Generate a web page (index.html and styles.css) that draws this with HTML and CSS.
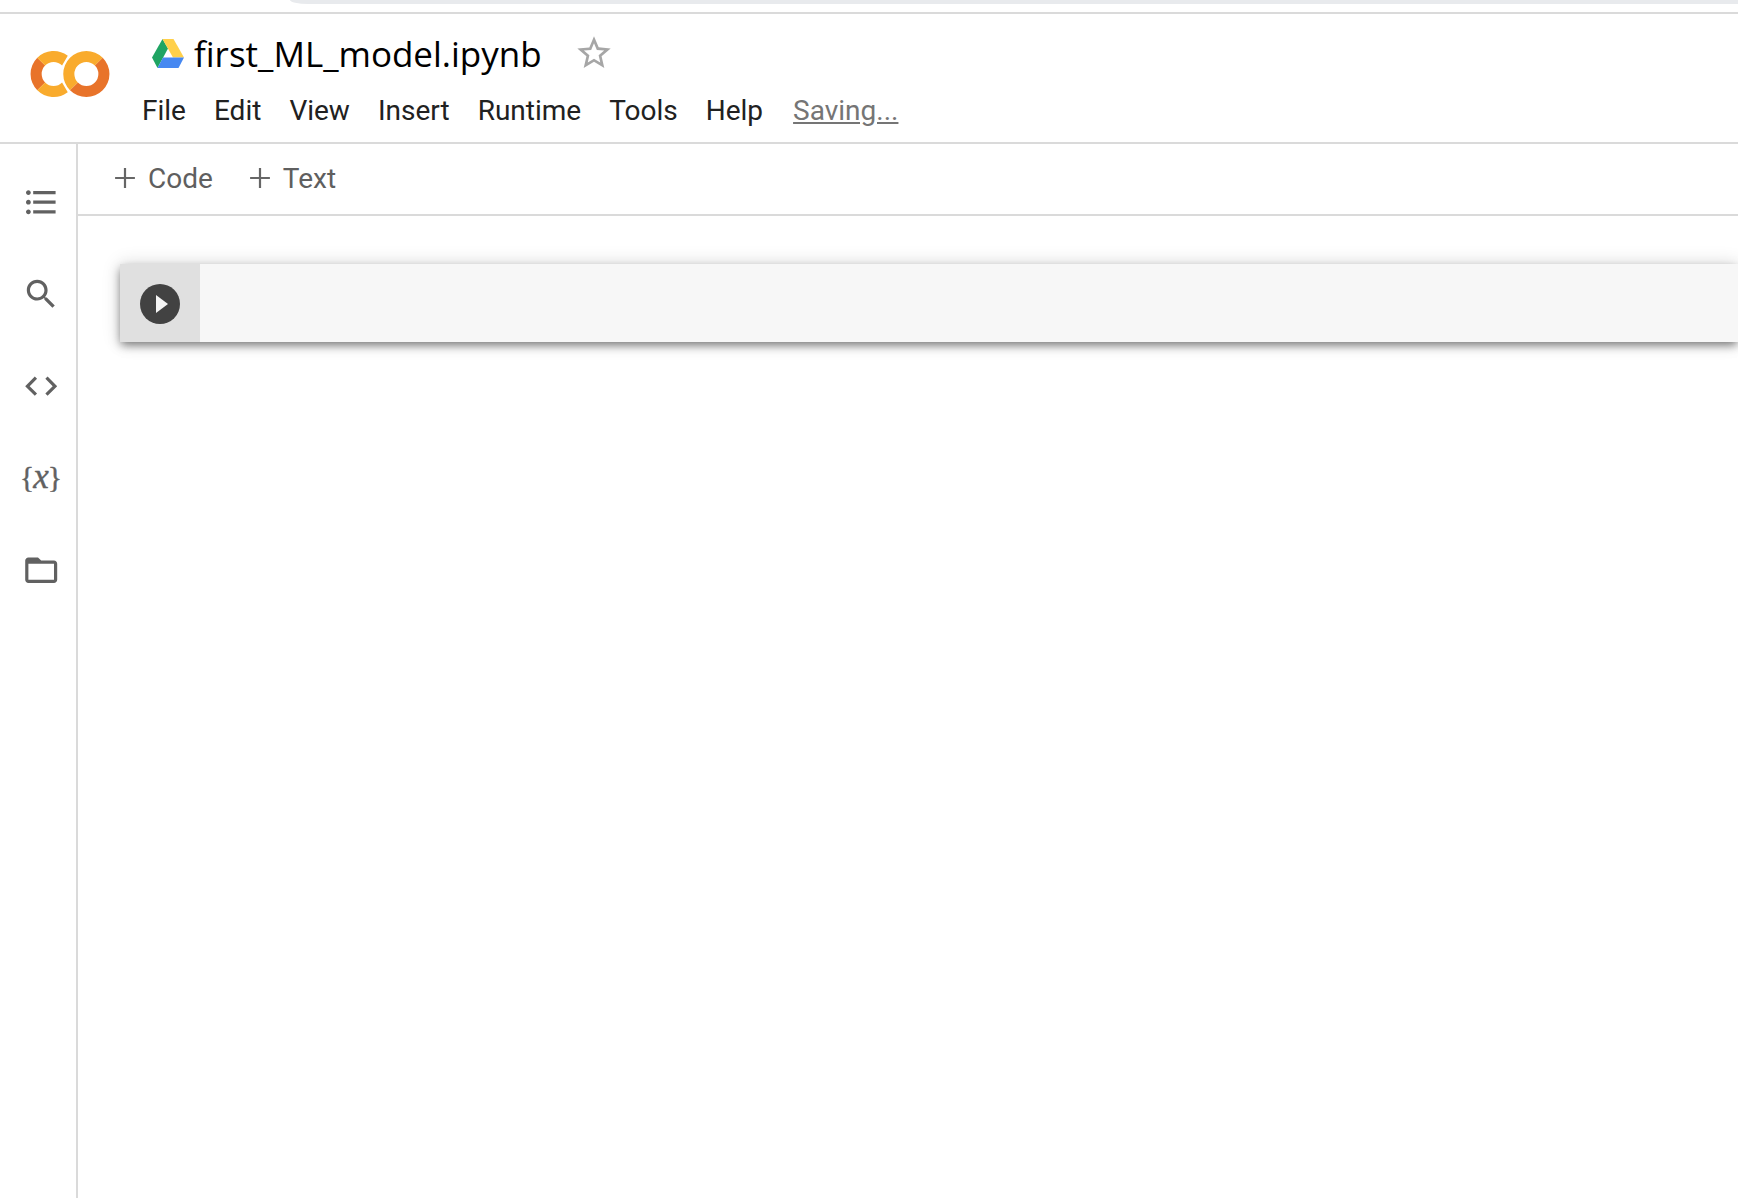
FILE: index.html
```html
<!DOCTYPE html>
<html lang="en">
<head>
<meta charset="utf-8">
<title>first_ML_model.ipynb</title>
<link rel="stylesheet" href="styles.css">
</head>
<body>
<div class="strip"><div class="strip-fill"></div></div>
<header class="header">
  <svg class="logo" viewBox="0 0 24 24">
    <path d="M4.54,9.46,2.19,7.1a6.93,6.93,0,0,0,0,9.79l2.36-2.36A3.59,3.59,0,0,1,4.54,9.46Z" fill="#E8732A"/>
    <path d="M2.19,7.1,4.54,9.46a3.59,3.59,0,0,1,5.08,0l1.71-2.93h0l-.1-.08h0A6.93,6.93,0,0,0,2.19,7.1Z" fill="#F9AB2D"/>
    <path d="M11.34,17.46h0L9.62,14.54a3.59,3.59,0,0,1-5.08,0L2.19,16.9a6.93,6.93,0,0,0,9,.65l.11-.09" fill="#F9AB2D"/>
    <path d="M12,7.1a6.93,6.93,0,0,0,0,9.79l2.36-2.36a3.59,3.59,0,1,1,5.08-5.08L21.81,7.1A6.93,6.93,0,0,0,12,7.1Z" fill="#F9AB2D"/>
    <path d="M21.81,7.1,19.46,9.46a3.59,3.59,0,0,1-5.08,5.08L12,16.9A6.93,6.93,0,0,0,21.81,7.1Z" fill="#E8732A"/>
  </svg>
  <div class="head-main">
    <div class="title-row">
      <svg class="drive" viewBox="0 0 32 29">
        <polygon points="10.5,0 16,9.5 5.5,29 0,18.5" fill="#1fa463"/>
        <polygon points="10.5,0 21.5,0 32,18.5 21,18.5" fill="#ffd04b"/>
        <polygon points="5.5,29 26.5,29 32,18.5 11,18.5" fill="#4688f1"/>
      </svg>
      <span class="title">first_ML_model.ipynb</span>
      <svg class="star" viewBox="0 0 24 24"><path d="M22 9.24l-7.19-.62L12 2 9.19 8.63 2 9.24l5.46 4.73L5.82 21 12 17.27 18.18 21l-1.63-7.03L22 9.24zM12 15.4l-3.76 2.27 1-4.28-3.32-2.88 4.38-.38L12 6.1l1.71 4.04 4.38.38-3.32 2.88 1 4.28L12 15.4z"/></svg>
    </div>
    <nav class="menu">
      <span>File</span><span>Edit</span><span>View</span><span>Insert</span><span>Runtime</span><span>Tools</span><span>Help</span><span class="saving">Saving...</span>
    </nav>
  </div>
</header>
<div class="body">
  <aside class="sidebar">
    <div class="side-item"><svg class="icon" viewBox="0 0 24 24"><path d="M4 10.5c-.83 0-1.5.67-1.5 1.5s.67 1.5 1.5 1.5 1.5-.67 1.5-1.5-.67-1.5-1.5-1.5zm0-6c-.83 0-1.5.67-1.5 1.5S3.17 7.5 4 7.5 5.5 6.83 5.5 6 4.83 4.5 4 4.5zm0 12c-.83 0-1.5.68-1.5 1.5s.68 1.5 1.5 1.5 1.5-.68 1.5-1.5-.67-1.5-1.5-1.5zM7 19h14v-2H7v2zm0-6h14v-2H7v2zm0-8v2h14V5H7z"/></svg></div>
    <div class="side-item"><svg class="icon" viewBox="0 0 24 24"><path d="M15.5 14h-.79l-.28-.27C15.41 12.59 16 11.11 16 9.5 16 5.91 13.09 3 9.5 3S3 5.91 3 9.5 5.91 16 9.5 16c1.61 0 3.09-.59 4.23-1.57l.27.28v.79l5 4.99L20.49 19l-4.99-5zm-6 0C7.01 14 5 11.99 5 9.5S7.01 5 9.5 5 14 7.01 14 9.5 11.99 14 9.5 14z"/></svg></div>
    <div class="side-item"><svg class="icon" viewBox="0 0 24 24"><path d="M9.4 16.6L4.8 12l4.6-4.6L8 6l-6 6 6 6 1.4-1.4zm5.2 0l4.6-4.6-4.6-4.6L16 6l6 6-6 6-1.4-1.4z"/></svg></div>
    <div class="side-item vars"><span>{</span><i>x</i><span>}</span></div>
    <div class="side-item"><svg class="icon" viewBox="0 0 24 24"><path d="M20 6h-8l-2-2H4c-1.1 0-1.99.9-1.99 2L2 18c0 1.1.9 2 2 2h16c1.1 0 2-.9 2-2V8c0-1.1-.9-2-2-2zm0 12H4V8h16v10z"/></svg></div>
  </aside>
  <main class="main">
    <div class="toolbar">
      <div class="tool"><svg class="plus" viewBox="0 0 20 20"><path d="M9 1h2v8h8v2h-8v8H9v-8H1V9h8z"/></svg><span>Code</span></div>
      <div class="tool"><svg class="plus" viewBox="0 0 20 20"><path d="M9 1h2v8h8v2h-8v8H9v-8H1V9h8z"/></svg><span>Text</span></div>
    </div>
    <div class="content">
      <div class="cell">
        <div class="gutter">
          <svg class="play" viewBox="0 0 40 40"><circle cx="20" cy="20" r="20" fill="#424242"/><polygon points="16,11 16,29 28,20" fill="#f5f5f5"/></svg>
        </div>
        <div class="editor"></div>
      </div>
    </div>
  </main>
</div>
</body>
</html>
```

FILE: styles.css
```css
* { box-sizing: border-box; }
html, body { margin: 0; height: 100%; background: #fff; overflow: hidden; }
body { display: flex; flex-direction: column; font-family: Roboto, "Liberation Sans", sans-serif; }

.strip { height: 14px; flex: none; border-bottom: 2px solid #dadada; padding-left: 290px; }
.strip-fill { height: 4px; background: #e8eaed; border-bottom-left-radius: 18px 4px; }

.header { height: 128px; flex: none; display: flex; }
.logo { width: 80px; height: 80px; margin: 20px 32px 0 30px; flex: none; }
.head-main { display: flex; flex-direction: column; }
.title-row { height: 54px; margin-top: 12px; display: flex; align-items: center; padding-left: 10px; }
.drive { width: 32px; height: 29px; flex: none; }
.title { margin-left: 10px; font-family: "Open Sans", sans-serif; font-size: 35px; color: #000; white-space: nowrap; }
.star { width: 40px; height: 40px; margin-left: 32px; fill: #a6a6a6; flex: none; }
.menu { display: flex; gap: 28px; margin-top: 12px; font-size: 28px; line-height: 38px; color: #212121; white-space: nowrap; }
.saving { color: #757575; text-decoration: underline; margin-left: 2px; }

.body { flex: 1; display: flex; min-height: 0; border-top: 2px solid #dadada; }
.sidebar { width: 78px; flex: none; border-right: 2px solid #dadada; padding: 12px 0 0 6px; }
.side-item { height: 92px; display: flex; align-items: center; justify-content: center; }
.icon { width: 38.4px; height: 38.4px; fill: #616161; }
.vars { font-family: "Liberation Serif", serif; font-size: 30px; color: #616161; padding-bottom: 3px; -webkit-text-stroke: .4px #616161; }
.vars i { margin: 0 -1px; font-size: 35px; }

.main { flex: 1; min-width: 0; display: flex; flex-direction: column; }
.toolbar { height: 72px; flex: none; border-bottom: 2px solid #dadada; display: flex; align-items: center; padding: 0 0 2px 36px; gap: 36px; font-size: 28px; color: #5f5f5f; }
.tool { display: flex; align-items: center; gap: 12px; }
.plus { width: 22px; height: 22px; fill: #666; }

.content { flex: 1; padding: 48px 0 0 42px; overflow: hidden; }
.cell { height: 78px; display: flex; background: #f7f7f7; box-shadow: 0 4px 9px -1px rgba(0,0,0,.5), 0 0 18px rgba(0,0,0,.14); }
.gutter { width: 80px; flex: none; background: #e0e0e0; display: flex; align-items: center; justify-content: center; padding-top: 2px; }
.play { width: 40px; height: 40px; }
.editor { flex: 1; }
```
